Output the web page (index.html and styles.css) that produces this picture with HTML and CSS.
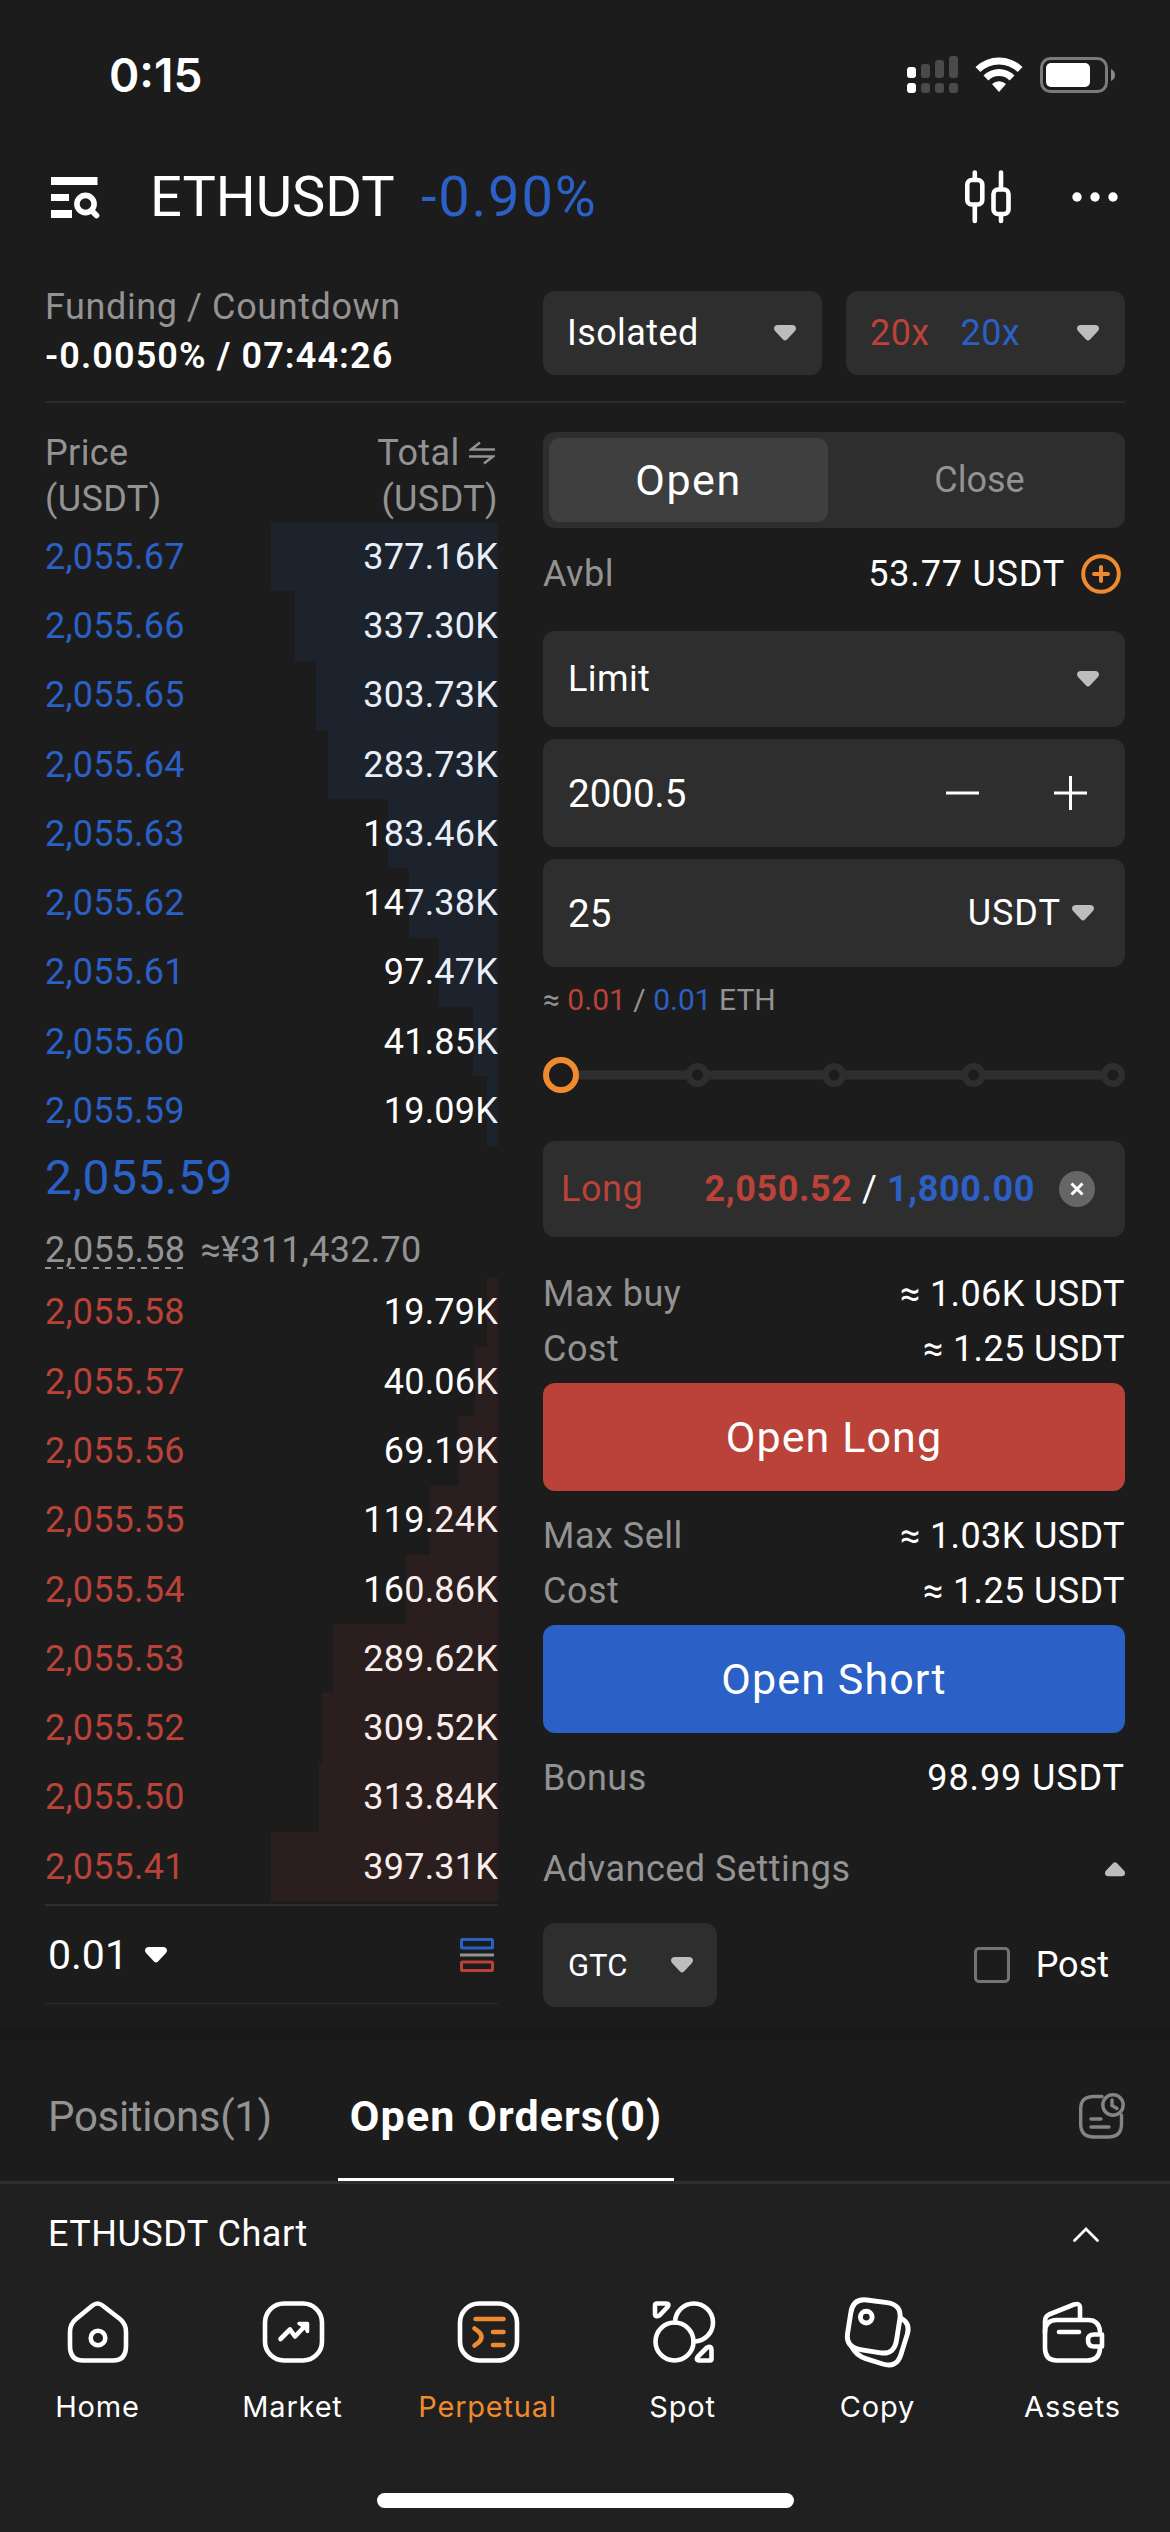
FILE: index.html
```html
<!DOCTYPE html>
<html lang="en">
<head>
  <meta charset="UTF-8" />
  <meta name="viewport" content="width=device-width, initial-scale=1.0" />
  <title>ETHUSDT Perpetual</title>
  <link rel="stylesheet" href="styles.css">
</head>
<body>
  <div class="status-bar">
    <span class="clock">0:15</span>
    <div class="status-icons">
      <svg width="51" height="38" viewBox="0 0 51 38">
        <g fill="#fff"><rect x="0" y="11" width="9" height="11" rx="3"/><rect x="0" y="27" width="9" height="10" rx="3"/></g>
        <g fill="#4a4a4a">
          <rect x="14" y="8" width="9" height="14" rx="3"/><rect x="28" y="4" width="9" height="18" rx="3"/><rect x="42" y="0" width="9" height="22" rx="3"/>
          <rect x="14" y="27" width="9" height="10" rx="3"/><rect x="28" y="27" width="9" height="10" rx="3"/><rect x="42" y="27" width="9" height="10" rx="3"/>
        </g>
      </svg>
      <svg class="wifi" width="48" height="38" viewBox="0 0 48 38" fill="#fff">
        <path d="M0.5 11 A34 34 0 0 1 47.5 11 L42.7 16 A27 27 0 0 0 5.3 16 Z"/>
        <path d="M8.5 19.5 A22 22 0 0 1 39.5 19.5 L34.6 24.5 A15 15 0 0 0 13.4 24.5 Z"/>
        <path d="M17 28 A10.5 10.5 0 0 1 31 28 L24 36 Z"/>
      </svg>
      <svg width="76" height="38" viewBox="0 0 76 38">
        <rect x="1.5" y="2.5" width="65" height="33" rx="9" fill="none" stroke="#7b7b7b" stroke-width="3"/>
        <rect x="6" y="7" width="44" height="24" rx="5" fill="#fff"/>
        <path d="M71 13 Q75 15 75 19 Q75 23 71 25 Z" fill="#8a8a8a"/>
      </svg>
    </div>
  </div>

  <header class="pair-header">
    <svg width="50" height="44" viewBox="0 0 50 44">
      <path d="M0 2H46.500V10H0Z M0 19H18V26H0Z M0 35H21V43H0Z" fill="#fff"/>
      <circle cx="34.500" cy="29" r="8.600" fill="none" stroke="#fff" stroke-width="5.600"/>
      <path d="M41 36 L45.500 40.500" stroke="#fff" stroke-width="5.600" stroke-linecap="round"/>
    </svg>
    <h1>ETHUSDT</h1>
    <span class="change">-0.90%</span>
    <div class="header-actions">
      <svg width="46" height="54" viewBox="0 0 46 54" fill="none" stroke="#fff" stroke-width="4.600" stroke-linecap="round">
        <rect x="2.300" y="10" width="15" height="24.500" rx="4.500"/>
        <rect x="28.500" y="19.500" width="15" height="24.500" rx="4.500"/>
        <path d="M9.800 2.500V9 M9.800 35V51 M36 2.500V19 M36 45V51"/>
      </svg>
      <svg width="46" height="10" viewBox="0 0 46 10" fill="#fff">
        <circle cx="5" cy="5" r="4.700"/><circle cx="23" cy="5" r="4.700"/><circle cx="41" cy="5" r="4.700"/>
      </svg>
    </div>
  </header>

  <section class="funding">
    <div class="funding-info">
      <div class="funding-label">Funding / Countdown</div>
      <div class="funding-value">-0.0050% / 07:44:26</div>
    </div>
    <div class="select"><span>Isolated</span><svg class="caret" viewBox="0 0 22 16"><path d="M4 0H18Q22 0 22 3.500Q22 5 20.500 6.500L13 14.500Q11 16.500 9 14.500L1.500 6.500Q0 5 0 3.500Q0 0 4 0Z"/></svg></div>
    <div class="select"><span class="lev"><b class="red">20x</b><b class="blue">20x</b></span><svg class="caret" viewBox="0 0 22 16"><path d="M4 0H18Q22 0 22 3.500Q22 5 20.500 6.500L13 14.500Q11 16.500 9 14.500L1.500 6.500Q0 5 0 3.500Q0 0 4 0Z"/></svg></div>
  </section>

  <main class="trade">
    <section class="book">
      <div class="book-head">
        <div>Price<br>(USDT)</div>
        <div class="right">Total <svg width="26" height="24" viewBox="0 0 26 24" fill="none" stroke="#939393" stroke-width="2.600"><path d="M26 8.500H2L11 1.500 M0 15.500H24L15 22.500"/></svg><br>(USDT)</div>
      </div>

      <div class="rows asks">
        <div class="row"><span>2,055.67</span><span>377.16K</span><i style="width:227px"></i></div>
        <div class="row"><span>2,055.66</span><span>337.30K</span><i style="width:203px"></i></div>
        <div class="row"><span>2,055.65</span><span>303.73K</span><i style="width:182px"></i></div>
        <div class="row"><span>2,055.64</span><span>283.73K</span><i style="width:170px"></i></div>
        <div class="row"><span>2,055.63</span><span>183.46K</span><i style="width:110px"></i></div>
        <div class="row"><span>2,055.62</span><span>147.38K</span><i style="width:89px"></i></div>
        <div class="row"><span>2,055.61</span><span>97.47K</span><i style="width:59px"></i></div>
        <div class="row"><span>2,055.60</span><span>41.85K</span><i style="width:25px"></i></div>
        <div class="row"><span>2,055.59</span><span>19.09K</span><i style="width:11px"></i></div>
      </div>

      <div class="last-price">2,055.59</div>
      <div class="index-price"><span class="dashed">2,055.58</span><span>≈¥311,432.70</span></div>

      <div class="rows bids">
        <div class="row"><span>2,055.58</span><span>19.79K</span><i style="width:11px"></i></div>
        <div class="row"><span>2,055.57</span><span>40.06K</span><i style="width:23px"></i></div>
        <div class="row"><span>2,055.56</span><span>69.19K</span><i style="width:39px"></i></div>
        <div class="row"><span>2,055.55</span><span>119.24K</span><i style="width:68px"></i></div>
        <div class="row"><span>2,055.54</span><span>160.86K</span><i style="width:92px"></i></div>
        <div class="row"><span>2,055.53</span><span>289.62K</span><i style="width:165px"></i></div>
        <div class="row"><span>2,055.52</span><span>309.52K</span><i style="width:176px"></i></div>
        <div class="row"><span>2,055.50</span><span>313.84K</span><i style="width:179px"></i></div>
        <div class="row"><span>2,055.41</span><span>397.31K</span><i style="width:227px"></i></div>
      </div>

      <div class="book-foot">
        <span>0.01</span>
        <svg class="caret white" viewBox="0 0 22 16"><path d="M4 0H18Q22 0 22 3.500Q22 5 20.500 6.500L13 14.500Q11 16.500 9 14.500L1.500 6.500Q0 5 0 3.500Q0 0 4 0Z"/></svg>
        <svg class="depth" width="34" height="34" viewBox="0 0 34 34" fill="none" stroke-width="3">
          <rect x="1.500" y="1.500" width="31" height="8.500" rx="1" stroke="#2b60c6"/>
          <path d="M0 17H34" stroke="#939393"/>
          <rect x="1.500" y="24" width="31" height="8.500" rx="1" stroke="#ba4239"/>
        </svg>
      </div>
    </section>

    <section class="order">
      <div class="segment">
        <div class="seg active">Open</div>
        <div class="seg">Close</div>
      </div>
      <div class="avbl">
        <span class="muted">Avbl</span>
        <span class="amount">53.77 USDT</span>
        <svg width="40" height="40" viewBox="0 0 40 40" fill="none" stroke="#ef8a2e" stroke-width="4" stroke-linecap="round"><circle cx="20" cy="20" r="17.800"/><path d="M13 20H27M20 13V27"/></svg>
      </div>

      <div class="field limit"><span>Limit</span><svg class="caret" viewBox="0 0 22 16"><path d="M4 0H18Q22 0 22 3.500Q22 5 20.500 6.500L13 14.500Q11 16.500 9 14.500L1.500 6.500Q0 5 0 3.500Q0 0 4 0Z"/></svg></div>
      <div class="field price">
        <span>2000.5</span>
        <svg width="141" height="34" viewBox="0 0 141 34" stroke="#fff" stroke-width="3"><path d="M0 17H33M108 17H141M124.500 0V34"/></svg>
      </div>
      <div class="field qty">
        <span>25</span>
        <span class="unit">USDT</span>
        <svg class="caret" viewBox="0 0 22 16"><path d="M4 0H18Q22 0 22 3.500Q22 5 20.500 6.500L13 14.500Q11 16.500 9 14.500L1.500 6.500Q0 5 0 3.500Q0 0 4 0Z"/></svg>
      </div>
      <div class="approx">≈ <span class="red">0.01</span> / <span class="blue">0.01</span> ETH</div>

      <svg class="slider" width="582" height="36" viewBox="0 0 582 36" fill="#1c1c1c">
        <path d="M18 18H570" stroke="#2e2e2e" stroke-width="9"/>
        <g stroke="#2e2e2e" stroke-width="6.500">
          <circle cx="154.500" cy="18" r="8.700"/><circle cx="291" cy="18" r="8.700"/><circle cx="430.500" cy="18" r="8.700"/><circle cx="570" cy="18" r="8.700"/>
        </g>
        <circle cx="18" cy="18" r="15" stroke="#ef8a2e" stroke-width="6"/>
      </svg>

      <div class="tpsl">
        <span class="red side">Long</span>
        <span class="targets"><b class="red">2,050.52</b> / <b class="blue">1,800.00</b></span>
        <svg width="36" height="36" viewBox="0 0 36 36"><circle cx="18" cy="18" r="18" fill="#666"/><path d="M12.500 12.500L23.500 23.500M23.500 12.500L12.500 23.500" stroke="#fff" stroke-width="3"/></svg>
      </div>

      <div class="pairs">
        <div class="pair"><span class="muted">Max buy</span><span>≈ 1.06K USDT</span></div>
        <div class="pair"><span class="muted">Cost</span><span>≈ 1.25 USDT</span></div>
      </div>
      <button class="btn long">Open Long</button>
      <div class="pairs second">
        <div class="pair"><span class="muted">Max Sell</span><span>≈ 1.03K USDT</span></div>
        <div class="pair"><span class="muted">Cost</span><span>≈ 1.25 USDT</span></div>
      </div>
      <button class="btn short">Open Short</button>

      <div class="pair bonus"><span class="muted">Bonus</span><span class="medium">98.99 USDT</span></div>
      <div class="pair advanced"><span class="muted">Advanced Settings</span><svg class="caret up" viewBox="0 0 22 16"><path d="M4 0H18Q22 0 22 3.500Q22 5 20.500 6.500L13 14.500Q11 16.500 9 14.500L1.500 6.500Q0 5 0 3.500Q0 0 4 0Z"/></svg></div>
      <div class="options">
        <div class="select gtc"><span>GTC</span><svg class="caret" viewBox="0 0 22 16"><path d="M4 0H18Q22 0 22 3.500Q22 5 20.500 6.500L13 14.500Q11 16.500 9 14.500L1.500 6.500Q0 5 0 3.500Q0 0 4 0Z"/></svg></div>
        <label class="post"><span class="box"></span>Post</label>
      </div>
    </section>
  </main>

  <div class="band"></div>

  <div class="tabs">
    <div class="tab positions">Positions(1)</div>
    <div class="tab orders active">Open Orders(0)</div>
    <svg width="46" height="46" viewBox="0 0 46 46" fill="none" stroke="#848484" stroke-width="3.400" stroke-linecap="round">
      <path d="M23 3.500H15Q1.700 3.500 1.700 16V31Q1.700 44 15 44H29Q42.500 44 42.500 31V22"/>
      <circle cx="34" cy="12" r="10.200"/>
      <path d="M33 7V12.500L38 15.500M12 26H22M12 34H30"/>
    </svg>
  </div>

  <div class="chart-bar">
    <span>ETHUSDT Chart</span>
    <svg width="26" height="15" viewBox="0 0 26 15" fill="none" stroke="#fff" stroke-width="2.800" stroke-linecap="round"><path d="M1.500 13.500L13 2L24.500 13.500"/></svg>
  </div>

  <nav class="nav">
    <div class="nav-item">
      <svg viewBox="0 0 64 64"><path d="M26.500 5.500Q31.500 1.500 36.500 5.500L54 19Q60 24 60 32V46Q60 60.500 47 60.500H17Q4 60.500 4 46V32Q4 24 10 19Z"/><circle cx="32" cy="38" r="7.300"/></svg>
      <span>Home</span>
    </div>
    <div class="nav-item">
      <svg viewBox="0 0 64 64"><rect x="4" y="3.500" width="57" height="57" rx="19"/><path d="M19.500 39L29 29.500L34 36.500L44 26"/><path d="M38 23.500H46.500V31.500L44 27Z" stroke-width="3.500"/></svg>
      <span>Market</span>
    </div>
    <div class="nav-item on">
      <svg viewBox="0 0 64 64"><rect x="4" y="3.500" width="57" height="57" rx="19"/><path class="accent" d="M19.500 19H47.500M37 32H47.500M37 45H47.500M18.500 28.500L22.500 31.500Q28.500 37 22.500 42.500L18.500 45.500"/></svg>
      <span>Perpetual</span>
    </div>
    <div class="nav-item">
      <svg viewBox="0 0 64 64"><circle cx="23.500" cy="41.500" r="19"/><path d="M24 22.500A19 19 0 1 1 43.500 41.500"/><path d="M6 3.500H15Q19 3.500 16.500 7L8.500 15.500Q4 17.500 4 14V5.500Q4 3.500 6 3.500Z"/><path d="M59 60.500H49Q44 60.500 47 56.500L56 47.500Q60.500 45.500 60.500 50V59Q60.500 60.500 59 60.500Z"/></svg>
      <span>Spot</span>
    </div>
    <div class="nav-item">
      <svg viewBox="3.500 1 60 60"><path d="M23 1L42 3.500Q56 5.500 54 19L51 38Q49 52.500 36 50.500L17 47.500Q3 45 5 32L8 13Q10 -0.500 23 1Z"/><circle cx="22.500" cy="17" r="5.500"/><path d="M55 18Q64 23 61 33L55 52Q51 65 38 61L22 56Q13 53 9 45"/></svg>
      <span>Copy</span>
    </div>
    <div class="nav-item">
      <svg viewBox="0 0 64 64"><path d="M4 33V21Q4 16.500 8 14.500L33 4.500Q39 2.500 39 8V20"/><path d="M59 31.500Q58 20 47 20H16Q4 20 4 32V48Q4 60.500 16 60.500H46Q58 60.500 59 49"/><path d="M61 34.500H53Q47 34.500 47 40Q47 46.500 53 46.500H61Z"/><path d="M18 32H38"/></svg>
      <span>Assets</span>
    </div>
  </nav>
  <div class="home-indicator"><span></span></div>
</body>
</html>
```
FILE: styles.css
```css
* {
  box-sizing: border-box;
}
body {
  margin: 0;
  width: 1170px;
  height: 2532px;
  overflow: hidden;
  background: #1c1c1c;
  color: #fff;
  font-family: Roboto, "Noto Sans CJK SC", sans-serif;
  font-size: 36px;
  display: flex;
  flex-direction: column;
}
svg {
  display: block;
  flex: none;
}
.red {
  color: #ba4239;
}
.blue {
  color: #2b60c6;
}
.muted {
  color: #939393;
  letter-spacing: 0.5px;
}
.medium {
  font-weight: 450;
}
.caret {
  width: 22px;
  height: 16px;
  fill: #bdbdbd;
}
.caret.white {
  fill: #fff;
}
.caret.up {
  width: 20px;
  transform: rotate(180deg);
}

/* status bar */
.status-bar {
  height: 147px;
  padding: 3px 54px 0 109px;
  display: flex;
  align-items: center;
  justify-content: space-between;
}
.clock {
  font-family: Inter, sans-serif;
  font-weight: 600;
  font-size: 46px;
}
.status-icons {
  display: flex;
  gap: 17px;
}

/* header */
.pair-header {
  height: 100px;
  padding: 0 52px 0 51px;
  display: flex;
  align-items: center;
}
.pair-header h1 {
  margin: 0 0 0 49px;
  font-size: 56px;
  font-weight: 400;
  width: 271px;
}
.change {
  font-size: 56px;
  color: #2b60c6;
  letter-spacing: 1.8px;
}
.header-actions {
  margin-left: auto;
  display: flex;
  align-items: center;
  gap: 61px;
}

/* funding */
.funding {
  height: 156px;
  margin: 0 45px;
  padding-top: 36px;
  border-bottom: 2px solid #2a2a2a;
  display: flex;
  gap: 24px;
}
.funding-info {
  width: 474px;
  line-height: 49px;
}
.funding-label {
  color: #939393;
  letter-spacing: 0.6px;
}
.funding-value {
  font-weight: 600;
  letter-spacing: 1.1px;
}
.select {
  width: 279px;
  height: 84px;
  margin-top: 8px;
  padding: 0 26px 0 24px;
  border-radius: 12px;
  background: #2e2e2e;
  display: flex;
  align-items: center;
  justify-content: space-between;
  font-weight: 450;
  letter-spacing: 0.4px;
}
.lev {
  display: flex;
  gap: 31px;
}
.lev b {
  font-weight: 450;
}

/* order book */
.trade {
  height: 1625px;
  padding: 0 45px;
  display: grid;
  grid-template-columns: 453px 582px;
  column-gap: 45px;
}
.book {
  padding-top: 27px;
}
.book-head {
  height: 92px;
  line-height: 46px;
  display: flex;
  justify-content: space-between;
  color: #939393;
  letter-spacing: 0.4px;
}
.book-head svg {
  display: inline-block;
  margin: 0 3px 0 0;
}
.right {
  text-align: right;
}
.row {
  position: relative;
  height: 69.3px;
  display: flex;
  align-items: center;
  justify-content: space-between;
  letter-spacing: 0.2px;
}
.row i {
  position: absolute;
  top: 0;
  right: 0;
  bottom: 0;
}
.row span + span {
  font-weight: 450;
}
.asks .row span:first-child {
  color: #2b60c6;
}
.asks i {
  background: rgba(43, 96, 198, 0.1);
}
.bids .row span:first-child {
  color: #ba4239;
}
.bids i {
  background: rgba(186, 66, 57, 0.09);
}
.last-price {
  height: 76px;
  line-height: 64px;
  font-size: 48px;
  font-weight: 450;
  letter-spacing: 0.5px;
  color: #2b60c6;
}
.index-price {
  height: 56px;
  display: flex;
  align-items: center;
  gap: 15px;
  color: #939393;
  letter-spacing: 0.3px;
}
.dashed {
  line-height: 38px;
  background: repeating-linear-gradient(90deg, #939393 0 6px, transparent 6px 12px) bottom / 100% 2px no-repeat;
}
.book-foot {
  height: 100px;
  margin-top: 3px;
  padding: 0 4px 0 3px;
  border-top: 2px solid #2e2e2e;
  border-bottom: 1px solid #2a2a2a;
  display: flex;
  align-items: center;
  font-size: 41px;
}
.book-foot .caret {
  margin-left: 17px;
}
.depth {
  margin-left: auto;
}

/* order form */
.order {
  padding-top: 29px;
}
.segment {
  height: 96px;
  padding: 6px;
  border-radius: 12px;
  background: #2e2e2e;
  display: flex;
  align-items: center;
}
.seg {
  flex: 1;
  height: 84px;
  padding-left: 12px;
  line-height: 84px;
  text-align: center;
  color: #939393;
}
.seg.active {
  flex: none;
  width: 279px;
  padding-left: 0;
  border-radius: 11px;
  background: #3f3f3f;
  color: #fff;
  font-size: 43px;
  font-weight: 450;
  letter-spacing: 1.5px;
}
.avbl {
  height: 91px;
  padding-right: 4px;
  margin-bottom: 12px;
  display: flex;
  align-items: center;
}
.avbl .amount {
  margin-left: auto;
  margin-right: 16px;
  font-weight: 450;
  letter-spacing: 0.8px;
}
.field {
  height: 108px;
  margin-bottom: 12px;
  padding: 0 26px 0 25px;
  border-radius: 12px;
  background: #2e2e2e;
  display: flex;
  align-items: center;
  justify-content: space-between;
}
.limit {
  height: 96px;
  font-weight: 450;
  letter-spacing: 0.4px;
}
.price,
.qty {
  font-size: 38.5px;
}
.price {
  padding-right: 38px;
}
.qty {
  padding-right: 31px;
}
.unit {
  margin-left: auto;
  margin-right: 11px;
  font-size: 36px;
  font-weight: 450;
  letter-spacing: 1px;
}
.approx {
  height: 42px;
  line-height: 42px;
  font-size: 30px;
  color: #939393;
}
.slider {
  margin-top: 36px;
}
.tpsl {
  height: 96px;
  margin-top: 48px;
  padding: 0 30px 0 18px;
  border-radius: 12px;
  background: #2e2e2e;
  display: flex;
  align-items: center;
  letter-spacing: 0.6px;
}
.targets {
  margin-left: auto;
  margin-right: 24px;
}
.pairs {
  padding-top: 29px;
  height: 146px;
}
.pairs.second {
  padding-top: 17px;
  height: 134px;
}
.pair {
  height: 55px;
  display: flex;
  align-items: center;
  justify-content: space-between;
  letter-spacing: 0.4px;
}
.pair .medium {
  letter-spacing: 0.9px;
}
.btn {
  display: block;
  width: 100%;
  height: 108px;
  border: none;
  border-radius: 12px;
  color: #fff;
  font-family: inherit;
  font-size: 43px;
  font-weight: 450;
  letter-spacing: 1.1px;
}
.long {
  background: #ba4239;
}
.short {
  background: #2b60c6;
}
.bonus {
  margin-top: 17px;
}
.advanced {
  margin-top: 36px;
}
.options {
  margin-top: 19px;
  display: flex;
  align-items: center;
  justify-content: space-between;
}
.gtc {
  width: 174px;
  margin-top: 8px;
  padding: 0 24px 0 25px;
  font-size: 31px;
  font-weight: 400;
  letter-spacing: 0;
}
.post {
  margin-top: 8px;
  margin-right: 16px;
  display: flex;
  align-items: center;
  gap: 26px;
}
.box {
  width: 36px;
  height: 36px;
  border: 3px solid #747474;
  border-radius: 5px;
}

/* positions / orders tabs */
.band {
  height: 12px;
  background: #181818;
}
.tabs {
  height: 144px;
  padding: 0 45px 0 48px;
  border-bottom: 3px solid #2e2e2e;
  display: flex;
  align-items: center;
  font-size: 42px;
  color: #939393;
}
.tab {
  height: 141px;
  line-height: 153px;
}
.positions {
  width: 290px;
  letter-spacing: -0.3px;
}
.orders {
  width: 336px;
  text-align: center;
  color: #fff;
  font-size: 43px;
  font-weight: 700;
  letter-spacing: 1.1px;
  border-bottom: 3px solid #fff;
}
.tabs svg {
  margin: 10px 0 0 auto;
}
.chart-bar {
  height: 100px;
  padding: 0 71px 0 48px;
  background: #202020;
  display: flex;
  align-items: center;
  justify-content: space-between;
  letter-spacing: 0.5px;
}

/* bottom navigation */
.nav {
  height: 170px;
  padding-top: 16px;
  background: #202020;
  display: grid;
  grid-template-columns: repeat(6, 195px);
}
.nav-item {
  display: flex;
  flex-direction: column;
  align-items: center;
  font-family: Inter, sans-serif;
  font-size: 29px;
  line-height: 40px;
  letter-spacing: 0.8px;
}
.nav-item svg {
  width: 64px;
  height: 64px;
  margin-bottom: 23px;
  overflow: visible;
  fill: none;
  stroke: #fff;
  stroke-width: 4.6px;
  stroke-linecap: round;
  stroke-linejoin: round;
}
.nav-item .accent {
  stroke: #ef8a2e;
}
.nav-item.on {
  color: #ef8a2e;
}
.home-indicator {
  flex: 1;
  background: #202020;
  padding-top: 39px;
}
.home-indicator span {
  display: block;
  width: 417px;
  height: 15px;
  margin: 0 auto;
  border-radius: 8px;
  background: #fff;
}
```
